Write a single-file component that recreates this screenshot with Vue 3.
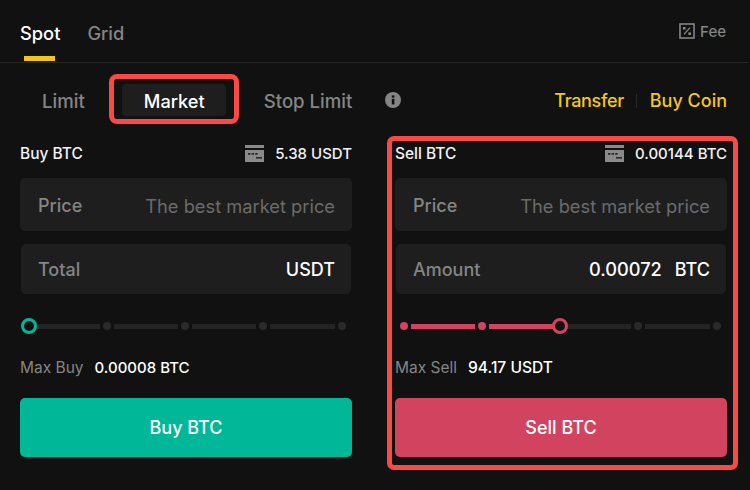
<script setup>
const sliderStops = [0, 1, 2, 3, 4]

const panels = [
  {
    side: 'buy',
    title: 'Buy BTC',
    balance: '5.38 USDT',
    field: 'Total',
    value: '',
    unit: 'USDT',
    knob: 0,
    maxLabel: 'Max Buy',
    maxValue: '0.00008 BTC'
  },
  {
    side: 'sell',
    title: 'Sell BTC',
    balance: '0.00144 BTC',
    field: 'Amount',
    value: '0.00072',
    unit: 'BTC',
    knob: 2,
    maxLabel: 'Max Sell',
    maxValue: '94.17 USDT'
  }
]
</script>

<template>
  <div class="trade">
    <header class="tabs">
      <div class="tabs-left">
        <span class="tab active">Spot</span>
        <span class="tab">Grid</span>
      </div>
      <span class="fee">
        <svg width="16" height="16" viewBox="0 0 16 16" fill="none">
          <rect x="1" y="1" width="14" height="14" stroke="#858585" stroke-width="1.6" />
          <path d="M11 4.6 5 11.4" stroke="#858585" stroke-width="1.4" />
          <rect x="4" y="4" width="2.6" height="2.6" fill="#858585" />
          <rect x="9.4" y="9.4" width="2.6" height="2.6" fill="#858585" />
        </svg>
        Fee
      </span>
    </header>

    <div class="order-types">
      <span class="type type-limit">Limit</span>
      <span class="type type-market">Market</span>
      <span class="type type-stop">Stop Limit</span>
      <svg class="info" width="16" height="16" viewBox="0 0 16 16">
        <circle cx="8" cy="8" r="8" fill="#858585" />
        <rect x="6.8" y="6.8" width="2.6" height="5.6" fill="#111" />
        <rect x="6.8" y="3.4" width="2.6" height="2.2" fill="#111" />
      </svg>
      <div class="links">
        <span class="link-transfer">Transfer</span>
        <i class="sep"></i>
        <span>Buy Coin</span>
      </div>
    </div>

    <div class="panels">
      <section v-for="panel in panels" :key="panel.side" class="panel" :class="panel.side">
        <div class="balance-row">
          <span class="panel-title">{{ panel.title }}</span>
          <span class="balance">
            <svg width="19" height="17" viewBox="0 0 19 17">
              <rect x="0" y="0" width="19" height="3" fill="#8a8a8a" />
              <path d="M0 5h19v12H0z" fill="#8a8a8a" />
              <rect x="3" y="8" width="2.4" height="1.8" fill="#2a2a2a" />
              <rect x="6.6" y="8" width="2.4" height="1.8" fill="#2a2a2a" />
              <rect x="10.2" y="8" width="2.4" height="1.8" fill="#2a2a2a" />
              <rect x="11" y="12" width="6" height="1.6" fill="#2a2a2a" />
            </svg>
            {{ panel.balance }}
          </span>
        </div>

        <div class="field field-price">
          <span class="field-label">Price</span>
          <span class="field-hint">The best market price</span>
        </div>

        <div class="field field-amount">
          <span class="field-label">{{ panel.field }}</span>
          <span class="field-right">
            <span v-if="panel.value" class="field-value">{{ panel.value }}</span>
            <span>{{ panel.unit }}</span>
          </span>
        </div>

        <div class="slider">
          <template v-for="stop in sliderStops" :key="stop">
            <i class="stop" :class="{ on: stop <= panel.knob, knob: stop === panel.knob }"></i>
            <i v-if="stop < 4" class="seg" :class="{ on: stop < panel.knob }"></i>
          </template>
        </div>

        <div class="max-row">
          <span class="max-label">{{ panel.maxLabel }}</span>
          <span class="max-value">{{ panel.maxValue }}</span>
        </div>

        <button class="submit" type="button">{{ panel.title }}</button>
      </section>
    </div>

    <!-- annotation boxes drawn over the screenshot -->
    <div class="mark mark-market"></div>
    <div class="mark mark-sell"></div>
  </div>
</template>

<style scoped>
.trade {
  position: relative;
  width: 750px;
  height: 490px;
  overflow: hidden;
  background: #111111;
  color: #eaecef;
  font-family: Inter, "Noto Sans", sans-serif;
}

.tabs {
  display: flex;
  align-items: flex-start;
  justify-content: space-between;
  height: 62px;
  margin-right: 2px;
  padding: 0 22px 0 20px;
  border-bottom: 1px solid #242424;
  box-sizing: content-box;
}

.tabs-left {
  display: flex;
  gap: 27px;
}

.tab {
  position: relative;
  height: 62px;
  padding-top: 21px;
  box-sizing: border-box;
  color: #858585;
  font-size: 18.3px;
  line-height: 24px;
  font-weight: 500;
}

.tab.active {
  color: #ffffff;
}

.tab.active::after {
  content: '';
  position: absolute;
  left: 4px;
  right: 5px;
  bottom: 1px;
  height: 5px;
  background: #f0c61e;
}

.fee {
  display: flex;
  align-items: center;
  gap: 5px;
  height: 16px;
  margin-top: 23px;
  color: #858585;
  font-size: 15px;
  font-weight: 500;
}

.order-types {
  display: flex;
  align-items: center;
  height: 32px;
  margin-top: 21px;
  padding: 0 23px 0 42px;
  font-size: 18.6px;
  font-weight: 500;
  color: #858585;
}

.type {
  padding-top: 1px;
}

.type-market {
  display: flex;
  align-items: center;
  justify-content: center;
  width: 104px;
  height: 32px;
  margin-left: 37px;
  padding-left: 1px;
  box-sizing: border-box;
  border-radius: 4px;
  background: #1e1e1e;
  color: #ffffff;
  font-size: 18.2px;
}

.type-stop {
  margin-left: 38px;
}

.info {
  margin-left: 33px;
}

.links {
  display: flex;
  align-items: center;
  margin-left: auto;
  padding-top: 1px;
  font-size: 18px;
  color: #f5c71a;
}

.link-transfer {
  letter-spacing: -0.35px;
}

.sep {
  width: 1px;
  height: 14px;
  margin: 0 13px 0 12px;
  background: #2a2a2a;
}

.panels {
  display: flex;
  gap: 43px;
  margin-top: 25px;
  padding: 0 23px 0 20px;
}

.panel {
  display: flex;
  flex-direction: column;
  width: 332px;
}

.balance-row {
  display: flex;
  align-items: center;
  justify-content: space-between;
  height: 24px;
  font-size: 15px;
  font-weight: 500;
  color: #f2f2f2;
}

.panel-title {
  font-size: 15.5px;
}

.balance {
  display: flex;
  align-items: center;
  gap: 11px;
}

.field {
  display: flex;
  align-items: center;
  justify-content: space-between;
  padding: 0 17px 0 18px;
  background: #1e1e1e;
  border-radius: 5px;
  font-size: 18px;
}

.field-price {
  height: 53px;
  margin-top: 13px;
  padding-top: 2px;
  box-sizing: border-box;
}

.field-amount {
  height: 50px;
  margin: 13px 1px 0;
  padding: 0 16px 0 17px;
}

.field-label {
  color: #858585;
  font-weight: 500;
}

.field-hint {
  color: #6b6b6b;
  font-size: 18.3px;
}

.field-right {
  display: flex;
  align-items: baseline;
  gap: 13px;
  color: #ffffff;
  font-weight: 500;
}

.field-value {
  font-size: 18.2px;
}

.slider {
  display: flex;
  align-items: center;
  height: 16px;
  margin: 24px 6.5px 0 4.5px;
}

.stop {
  flex: none;
  width: 8px;
  height: 8px;
  border-radius: 50%;
  background: #2a2a2a;
}

.stop.on {
  background: #d1435f;
}

.stop.knob {
  position: relative;
  z-index: 1;
  width: 16px;
  height: 16px;
  margin: 0 -4px;
  box-sizing: border-box;
  border: 3px solid #d1435f;
  background: #111111;
}

.buy .stop.knob {
  border-color: #00b897;
}

.seg {
  flex: 1;
  height: 5px;
  margin: 0 3px;
  background: #242424;
}

.seg.on {
  background: #d1435f;
}

.max-row {
  display: flex;
  align-items: center;
  gap: 11px;
  height: 20px;
  margin-top: 23px;
  font-size: 15.5px;
}

.max-label {
  color: #858585;
}

.max-value {
  color: #ffffff;
  font-size: 15px;
  font-weight: 500;
}

.sell .max-value {
  font-size: 15.6px;
}

.submit {
  height: 59px;
  margin-top: 21px;
  border: 0;
  border-radius: 5px;
  color: #ffffff;
  font-family: inherit;
  font-size: 18px;
  font-weight: 500;
}

.buy .submit {
  background: #00b897;
}

.sell .submit {
  background: #d1435f;
}

.mark {
  position: absolute;
  box-sizing: border-box;
  border: 5px solid #f84b45;
  pointer-events: none;
}

.mark-market {
  left: 109px;
  top: 74px;
  width: 130px;
  height: 50px;
  border-radius: 8px;
}

.mark-sell {
  left: 387px;
  top: 136px;
  width: 351px;
  height: 334px;
  border-radius: 7px;
}
</style>

<style>
html,
body {
  margin: 0;
  background: #111111;
}
</style>
